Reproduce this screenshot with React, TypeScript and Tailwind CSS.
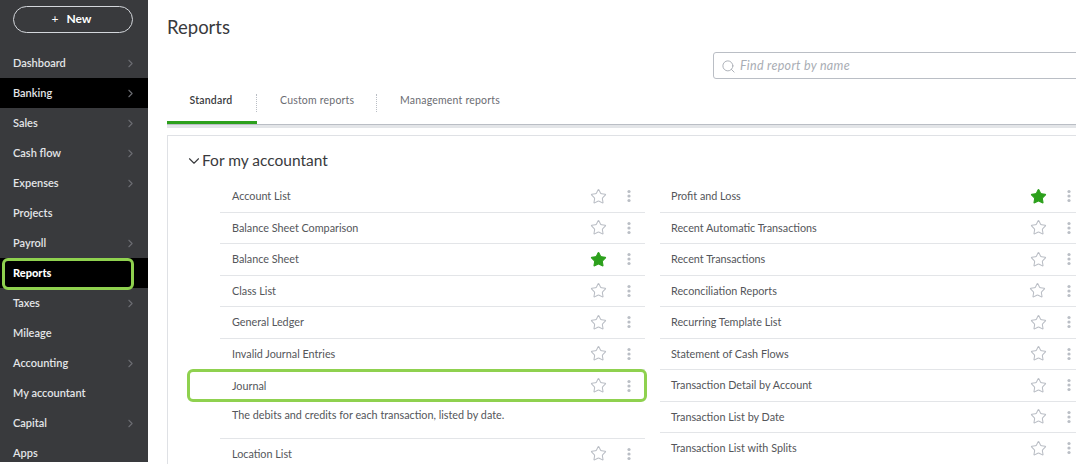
import { ChevronDown, ChevronRight, Search, Star } from "lucide-react";

const nav = [
  { label: "Dashboard", arrow: true },
  { label: "Banking", arrow: true, dark: true },
  { label: "Sales", arrow: true },
  { label: "Cash flow", arrow: true },
  { label: "Expenses", arrow: true },
  { label: "Projects" },
  { label: "Payroll", arrow: true },
  { label: "Reports", dark: true, active: true },
  { label: "Taxes", arrow: true },
  { label: "Mileage" },
  { label: "Accounting", arrow: true },
  { label: "My accountant" },
  { label: "Capital", arrow: true },
  { label: "Apps" },
];

const leftReports = [
  { name: "Account List" },
  { name: "Balance Sheet Comparison" },
  { name: "Balance Sheet", starred: true },
  { name: "Class List" },
  { name: "General Ledger" },
  { name: "Invalid Journal Entries" },
];

const rightReports = [
  { name: "Profit and Loss", starred: true },
  { name: "Recent Automatic Transactions" },
  { name: "Recent Transactions" },
  { name: "Reconciliation Reports", nudge: true },
  { name: "Recurring Template List" },
  { name: "Statement of Cash Flows" },
  { name: "Transaction Detail by Account" },
  { name: "Transaction List by Date" },
  { name: "Transaction List with Splits" },
];

function Dots() {
  return (
    <svg width="8" height="14" viewBox="0 0 8 14" className="shrink-0">
      <circle cx="4" cy="2.5" r="1.6" fill="#babec5" />
      <circle cx="4" cy="7" r="1.6" fill="#babec5" />
      <circle cx="4" cy="11.5" r="1.6" fill="#babec5" />
    </svg>
  );
}

interface RowProps {
  name: string;
  starred?: boolean;
  plain?: boolean;
  nudge?: boolean;
  right?: boolean;
}

function ReportRow({ name, starred, plain, nudge, right }: RowProps) {
  return (
    <div className={`flex h-[31.5px] w-[425px] items-center pr-3 text-[10.8px] text-[#54565a] ${right ? "pl-[11px]" : "pl-3"} ${plain ? "" : "border-b border-[#e3e5e8]"}`}>
      <span>{name}</span>
      {starred ? (
        <Star size={17} strokeWidth={1.5} className="ml-auto shrink-0 fill-[#2ca01c] text-[#2ca01c]" />
      ) : (
        <Star size={17} strokeWidth={1.5} className={`ml-auto shrink-0 text-[#babec5] ${nudge ? "-translate-x-px" : ""}`} />
      )}
      <div className="ml-[18px] flex">
        <Dots />
      </div>
    </div>
  );
}

export default function App() {
  return (
    <div className="flex h-[464px] w-[1076px] overflow-hidden bg-white font-['Lato',sans-serif]">
      <aside className="h-[462px] w-[148px] shrink-0 overflow-hidden bg-[#393a3d]">
        <div className="px-[13px] pt-[6px] pb-[15px]">
          <button className="flex h-[27px] w-[120px] items-center justify-center gap-[8px] rounded-full border border-[#d4d7dc] pb-px pr-[3px] text-[12px] font-bold text-white">
            <span className="text-[12px] font-normal">+</span>
            New
          </button>
        </div>
        <nav>
          {nav.map((item) => (
            <div
              key={item.label}
              className={`relative flex h-[30px] items-center pl-[13px] pr-[11px] text-[11px] ${item.dark ? "bg-black" : ""} ${item.active ? "font-black text-white" : "font-semibold text-[#e3e5e8]"}`}
            >
              {item.label}
              {item.arrow && <ChevronRight size={13} strokeWidth={2} className="ml-auto text-[#6b6c72]" />}
              {item.active && (
                <div className="absolute top-0 left-[2px] h-[32px] w-[132px] rounded-[6px] border-[3px] border-[#8fd14f]" />
              )}
            </div>
          ))}
        </nav>
      </aside>

      <main className="min-w-0 flex-1 overflow-hidden pl-[19px]">
        <h1 className="pt-[13px] text-[18.5px] leading-[28px] text-[#393a3d]">Reports</h1>
        <div className="mt-[11px] flex h-[27px] justify-end">
          <div className="flex w-[420px] -mr-[57px] shrink-0 items-center gap-[4px] rounded-[3px] border border-[#babec5] pt-[2px] pl-[7px] text-[12.5px] italic tracking-[0.3px] text-[#a9adb4]">
            <Search size={15} strokeWidth={1.5} className="text-[#a9adb4]" />
            Find report by name
          </div>
        </div>

        <div className="flex h-[45px] items-start text-[10.5px] tracking-[0.2px] text-[#6b6c72]">
          <div className="flex h-[45px] w-[90px] items-center justify-center border-b-[3px] border-[#2ca01c] pt-[2px] pr-[2px] font-semibold text-[#393a3d]">
            Standard
          </div>
          <div className="mt-[15px] -ml-px h-[18px] border-l border-dotted border-[#babec5]" />
          <div className="flex h-[44px] w-[119px] items-center pl-[23px]">Custom reports</div>
          <div className="mt-[15px] h-[18px] border-l border-dotted border-[#babec5]" />
          <div className="flex h-[44px] items-center pl-[23px]">Management reports</div>
        </div>
        <div className="h-[4px] w-[920px] border-t border-[#babec5] bg-[#e3e5e8]" />

        <section className="mt-[7px] w-[960px] border border-[#dfe1e5] pt-[14px]">
          <div className="flex h-[22px] items-center pl-[18px] text-[15.5px] text-[#393a3d]">
            <ChevronDown size={18} strokeWidth={1.5} className="-ml-[1px] mr-[-1px]" />
            For my accountant
          </div>
          <div className="mt-[9px] ml-[52px] grid grid-cols-[425px_425px] gap-x-[15px]">
            <div>
              {leftReports.map((r) => (
                <ReportRow key={r.name} {...r} />
              ))}
              <div className="relative">
                <ReportRow name="Journal" plain />
                <div className="absolute -top-[1px] -right-[2px] -bottom-0 -left-[33px] rounded-[6px] border-[3px] border-[#8fd14f]" />
              </div>
              <div className="flex h-[37px] items-start border-b border-[#e3e5e8] pt-[5px] pl-3 text-[10.8px] text-[#54565a]">
                The debits and credits for each transaction, listed by date.
              </div>
              <ReportRow name="Location List" />
            </div>
            <div>
              {rightReports.map((r) => (
                <ReportRow key={r.name} right {...r} />
              ))}
            </div>
          </div>
        </section>
      </main>
    </div>
  );
}
